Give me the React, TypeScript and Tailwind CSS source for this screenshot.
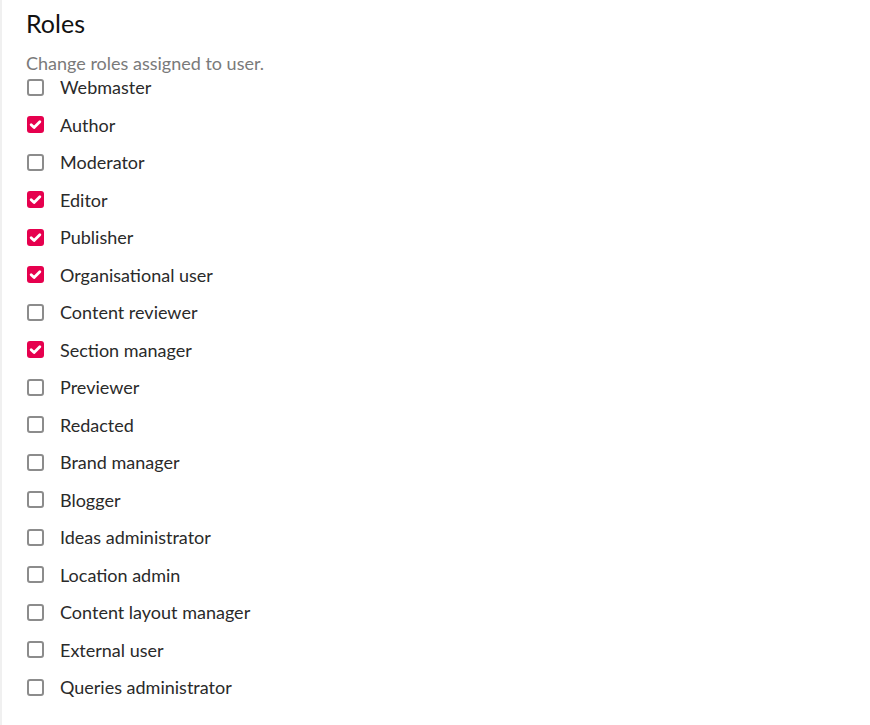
import React from "react";

const roles: [string, boolean][] = [
  ["Webmaster", false],
  ["Author", true],
  ["Moderator", false],
  ["Editor", true],
  ["Publisher", true],
  ["Organisational user", true],
  ["Content reviewer", false],
  ["Section manager", true],
  ["Previewer", false],
  ["Redacted", false],
  ["Brand manager", false],
  ["Blogger", false],
  ["Ideas administrator", false],
  ["Location admin", false],
  ["Content layout manager", false],
  ["External user", false],
  ["Queries administrator", false],
];

function Box({ checked }: { checked: boolean }) {
  if (checked) {
    return (
      <span className="flex h-[17px] w-[17px] items-center justify-center rounded-[3px] bg-[#e6004e]">
        <svg width="13" height="13" viewBox="0 0 12 12" fill="none">
          <path d="M2 6.2 L4.7 8.8 L10 3.4" stroke="white" strokeWidth="2.6" strokeLinecap="round" strokeLinejoin="round" />
        </svg>
      </span>
    );
  }
  return <span className="block h-[17px] w-[17px] rounded-[3px] border-2 border-[#8c8c8c] bg-white" />;
}

export default function App() {
  return (
    <div className="min-h-[725px] w-[870px] bg-white" style={{ fontFamily: "Lato, 'Noto Sans', sans-serif" }}>
      <div className="min-h-[725px] border-l-2 border-[#f0f0f0] pl-[24px] pt-[7px]">
        <h1 className="text-[25px] leading-[32px] text-[#111]">Roles</h1>
        <p className="mt-[12px] text-[18px] leading-[24px] text-[#7a7a7a]">Change roles assigned to user.</p>
        <ul>
          {roles.map(([name, checked]) => (
            <li key={name} className="mb-[13.5px] flex h-[24px] items-center">
              <span className="ml-[1px]">
                <Box checked={checked} />
              </span>
              <span className="ml-[16px] text-[18px] leading-[24px] text-[#2a2a2a]">{name}</span>
            </li>
          ))}
        </ul>
      </div>
    </div>
  );
}
